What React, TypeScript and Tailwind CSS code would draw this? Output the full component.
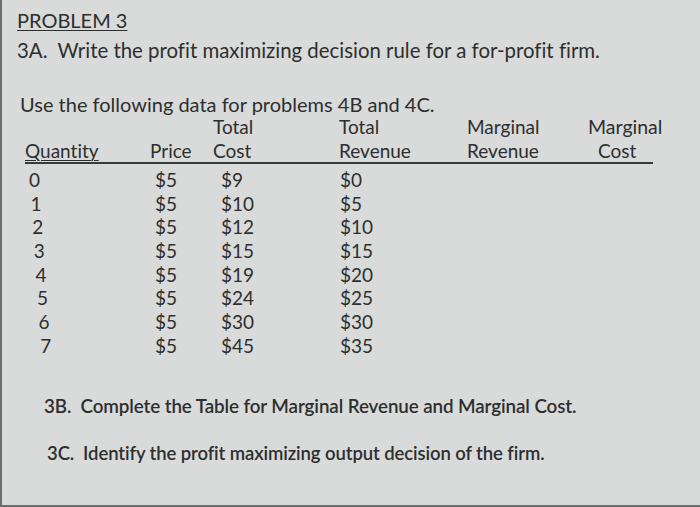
import React from 'react';

const rows = [
  { q: '0', price: '$5', cost: '$9', rev: '$0' },
  { q: '1', price: '$5', cost: '$10', rev: '$5' },
  { q: '2', price: '$5', cost: '$12', rev: '$10' },
  { q: '3', price: '$5', cost: '$15', rev: '$15' },
  { q: '4', price: '$5', cost: '$19', rev: '$20' },
  { q: '5', price: '$5', cost: '$24', rev: '$25' },
  { q: '6', price: '$5', cost: '$30', rev: '$30' },
  { q: '7', price: '$5', cost: '$45', rev: '$35' },
];

const cols = 'grid grid-cols-[125px_63px_126px_128px_121px_70px]';

const App: React.FC = () => {
  return (
    <div
      className="w-[700px] h-[507px] overflow-hidden bg-[#d8dbda] text-[#2e2e2e] border-l-2 border-b-2 border-[#6b6e6e] [font-variant-ligatures:none]"
      style={{ fontFamily: 'Lato, "Open Sans", sans-serif' }}
    >
      <div className="pl-[15px] pt-[8px]">
        <h1 className="text-[20px] leading-[24px] underline underline-offset-2 decoration-1">PROBLEM 3</h1>
        <p className="mt-[6px] text-[20.4px] leading-[24px]">3A.&nbsp; Write the profit maximizing decision rule for a for-profit firm.</p>

        <p className="mt-[30px] ml-[3px] text-[20px] leading-[24px]">Use the following data for problems 4B and 4C.</p>

        <div className="ml-[8px] -mt-[2px] text-[19px]">
          <div className={`${cols} leading-[26px]`}>
            <div />
            <div />
            <div>Total</div>
            <div>Total</div>
            <div>Marginal</div>
            <div className="text-[19.5px]">Marginal</div>
          </div>
          <div className={`${cols} leading-[22px] w-[628px] border-b-2 border-[#3a3a3a]`}>
            <div className="underline decoration-1 underline-offset-2">Quantity</div>
            <div>Price</div>
            <div>Cost</div>
            <div>Revenue</div>
            <div>Revenue</div>
            <div className="pl-[10px]">Cost</div>
          </div>
          <div className="pt-[4px]">
            {rows.map((r, i) => (
              <div key={r.q} className={`${cols} h-[23.7px] leading-[23px]`}>
                <div style={{ paddingLeft: 4 + i * 1.6 }}>{r.q}</div>
                <div className="pl-[5px]">{r.price}</div>
                <div className="pl-[8px]">{r.cost}</div>
                <div className="pl-[1px]">{r.rev}</div>
                <div />
                <div />
              </div>
            ))}
          </div>
        </div>

        <p className="mt-[38px] ml-[27px] text-[18.8px] font-semibold leading-[20px] tracking-[-0.1px]">
          3B.&nbsp; Complete the Table for Marginal Revenue and Marginal Cost.
        </p>
        <p className="mt-[27px] ml-[30px] text-[18.5px] font-semibold leading-[20px] tracking-[-0.1px]">
          3C.&nbsp; Identify the profit maximizing output decision of the firm.
        </p>
      </div>
    </div>
  );
};

export default App;
